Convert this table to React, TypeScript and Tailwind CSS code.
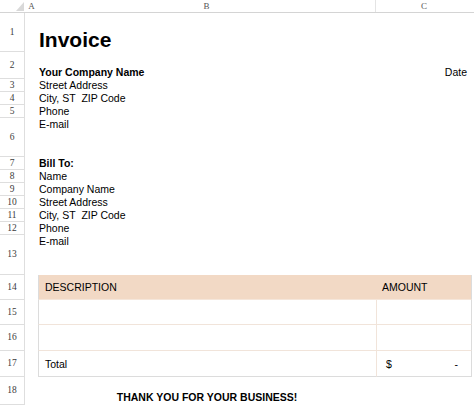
import React from "react";

const GUT = "w-[25px] shrink-0 border-r border-b border-[#dedede] flex items-center justify-center font-['Liberation_Serif',serif] text-[9.5px] text-[#3c3c3c]";
const COLA = "w-[13px] shrink-0";
const COLB = "w-[338px] shrink-0";
const COLC = "w-[96px] shrink-0";

function Row({
  n,
  h,
  b,
  c,
  bClass = "flex items-end pl-[1px]",
  cClass = "flex items-end justify-end pr-[5px]",
}: {
  n: number;
  h: string;
  b?: React.ReactNode;
  c?: React.ReactNode;
  bClass?: string;
  cClass?: string;
}) {
  return (
    <div className={`flex ${h}`}>
      <div className={GUT}>{n}</div>
      <div className={COLA} />
      <div className={`${COLB} whitespace-nowrap ${bClass}`}>{b}</div>
      <div className={`${COLC} whitespace-nowrap ${cClass}`}>{c}</div>
    </div>
  );
}

export default function App() {
  return (
    <div className="w-[474px] h-[405px] overflow-hidden bg-white text-black font-['Liberation_Sans',Arial,sans-serif] text-[10.5px] leading-[13px]">
      {/* column header */}
      <div className="flex h-[13px] border-b border-[#d4d4d4] font-['Liberation_Serif',serif] text-[9px] text-[#555555] leading-[12px]">
        <div className="w-[25px] shrink-0 flex justify-end items-start pt-[2px] pr-[1px]">
          <svg width="8" height="9" viewBox="0 0 8 9">
            <polygon points="0,9 8,0 8,9" fill="#d9d9d9" />
          </svg>
        </div>
        <div className={`${COLA} text-center`}>A</div>
        <div className={`${COLB} text-center border-r border-[#e4e4e4]`}>B</div>
        <div className={`${COLC} text-center`}>C</div>
      </div>

      <Row n={1} h="h-[39px]" b={<span className="text-[21px] leading-[24px] font-bold">Invoice</span>} />
      <Row n={2} h="h-[27px]" b={<span className="font-bold">Your Company Name</span>} c="Date" />
      <Row n={3} h="h-[13px]" b="Street Address" />
      <Row n={4} h="h-[13px]" b={"City, ST\u00a0 ZIP Code"} />
      <Row n={5} h="h-[13px]" b="Phone" />
      <Row n={6} h="h-[39px]" b="E-mail" bClass="flex items-start pl-[1px]" />
      <Row n={7} h="h-[13px]" b={<span className="font-bold">Bill To:</span>} />
      <Row n={8} h="h-[13px]" b="Name" />
      <Row n={9} h="h-[13px]" b="Company Name" />
      <Row n={10} h="h-[13px]" b="Street Address" />
      <Row n={11} h="h-[13px]" b={"City, ST\u00a0 ZIP Code"} />
      <Row n={12} h="h-[13px]" b="Phone" />
      <Row n={13} h="h-[40px]" b="E-mail" bClass="flex items-start pl-[1px]" />

      <Row
        n={14}
        h="h-[25px]"
        b="DESCRIPTION"
        c="AMOUNT"
        bClass="flex items-center pl-[6px] bg-[#f2d9c5] border-l border-b border-l-[#dcdcdc] border-b-[#f5e6da]"
        cClass="flex items-center pl-[6px] bg-[#f2d9c5] border-r border-b border-r-[#dcdcdc] border-b-[#f5e6da]"
      />
      <Row
        n={15}
        h="h-[25px]"
        bClass="border-l border-b border-l-[#dcdcdc] border-b-[#f1e4da]"
        cClass="border-l border-r border-b border-l-[#f1e4da] border-r-[#dcdcdc] border-b-[#f1e4da]"
      />
      <Row
        n={16}
        h="h-[26px]"
        bClass="border-l border-b border-l-[#dcdcdc] border-b-[#f1e4da]"
        cClass="border-l border-r border-b border-l-[#f1e4da] border-r-[#dcdcdc] border-b-[#f1e4da]"
      />
      <Row
        n={17}
        h="h-[26px]"
        b="Total"
        c={
          <>
            <span>$</span>
            <span>-</span>
          </>
        }
        bClass="flex items-center pl-[6px] pt-[2px] border-l border-b border-[#dcdcdc]"
        cClass="flex items-center justify-between pl-[9px] pr-[13px] pt-[2px] border-l border-r border-b border-l-[#f1e4da] border-r-[#dcdcdc] border-b-[#dcdcdc]"
      />
      <Row
        n={18}
        h="h-[28px]"
        b={<span className="font-bold">THANK YOU FOR YOUR BUSINESS!</span>}
        bClass="flex items-end justify-center pb-[1px]"
      />
    </div>
  );
}
